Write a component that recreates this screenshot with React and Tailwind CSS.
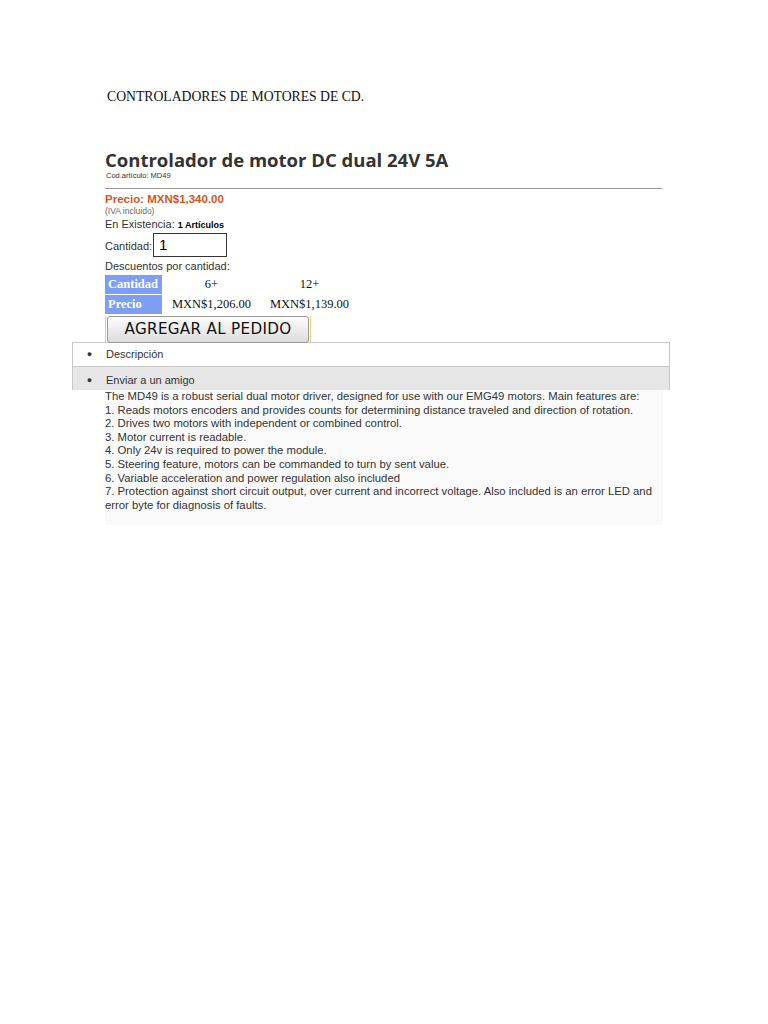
import React from 'react';

const SANS = { fontFamily: '"Liberation Sans", Arial, sans-serif' };

const features = [
  'The MD49 is a robust serial dual motor driver, designed for use with our EMG49 motors. Main features are:',
  '1. Reads motors encoders and provides counts for determining distance traveled and direction of rotation.',
  '2. Drives two motors with independent or combined control.',
  '3. Motor current is readable.',
  '4. Only 24v is required to power the module.',
  '5. Steering feature, motors can be commanded to turn by sent value.',
  '6. Variable acceleration and power regulation also included',
  '7. Protection against short circuit output, over current and incorrect voltage. Also included is an error LED and error byte for diagnosis of faults.',
];

function Tab({ label, active }) {
  return (
    <li
      className={`flex items-center border border-[#c8c8c8] ${
        active ? 'h-[25px] bg-white' : 'h-[23px] pt-[4px] bg-[#e6e6e6] border-t-0 border-b-0'
      }`}
    >
      <span className="w-[33px] text-center text-[9px] text-[#333]">●</span>
      <span className="text-[11px] text-[#333]">{label}</span>
    </li>
  );
}

export default function App() {
  return (
    <div className="min-h-[1024px] bg-white pt-[89px]" style={SANS}>
      <p
        className="ml-[107px] text-[13.7px] leading-[16px] text-[#111]"
        style={{ fontFamily: '"Liberation Serif", "Times New Roman", serif' }}
      >
        CONTROLADORES DE MOTORES DE CD.
      </p>

      <div className="ml-[105px] mr-[106px] mt-[44px]">
        <h1
          className="text-[18.5px] leading-[22px] font-bold text-[#333]"
          style={{ fontFamily: '"Open Sans", "Noto Sans", sans-serif' }}
        >
          Controlador de motor DC dual 24V 5A
        </h1>
        <p className="text-[7.5px] leading-[10px] text-[#333] ml-[1px]">Cod.artículo: MD49</p>
        <div className="mt-[7px] border-t border-[#999]" />

        <p className="mt-[4px] text-[11.5px] leading-[13px] font-bold text-[#d9531e]">
          Precio: MXN$1,340.00
        </p>
        <p className="text-[8.5px] leading-[11px] text-[#666]">(IVA incluido)</p>
        <p className="mt-[1px] text-[11px] leading-[13px] text-[#333]">
          En Existencia: <span className="text-[9px] font-bold text-black">1 Artículos</span>
        </p>
        <div className="mt-[1px] flex items-center text-[11px] text-[#333]">
          <span className="pt-[3px]">Cantidad:</span>
          <span className="ml-[1px] flex items-center w-[74px] h-[24px] border border-[#333] px-[5px] text-[15px] text-black">
            1
          </span>
        </div>
        <p className="mt-[2px] text-[11px] leading-[14px] text-[#333]">Descuentos por cantidad:</p>

        <table
          className="mt-[1px] border-separate border-spacing-[1px] -ml-[1px] text-[12.5px] text-[#111]"
          style={{ fontFamily: '"Liberation Serif", "Times New Roman", serif' }}
        >
          <tbody>
            <tr className="h-[19px]">
              <td className="w-[57px] bg-[#7d9ef2] px-[3px] font-bold text-white">Cantidad</td>
              <td className="w-[97px] text-center">6+</td>
              <td className="w-[97px] text-center">12+</td>
            </tr>
            <tr className="h-[19px]">
              <td className="bg-[#7d9ef2] px-[3px] font-bold text-white">Precio</td>
              <td className="text-center">MXN$1,206.00</td>
              <td className="text-center">MXN$1,139.00</td>
            </tr>
          </tbody>
        </table>

        <div className="mt-[1px] flex w-[206px] h-[27px] border-x border-[#efc880] px-[1px]">
          <button
            className="flex-1 rounded-[3px] border border-[#9a9a9a] bg-gradient-to-b from-[#fdfdfd] to-[#dcdcdc] text-[15.2px] text-[#111] tracking-[0.3px]"
            style={{ fontFamily: '"DejaVu Sans", Verdana, sans-serif' }}
          >
            AGREGAR AL PEDIDO
          </button>
        </div>
      </div>

      <ul className="ml-[72px] mr-[98px] mt-[-1px]">
        <Tab label="Descripción" active />
        <Tab label="Enviar a un amigo" />
      </ul>

      <div className="ml-[105px] mr-[105px] h-[135px] bg-[#fafafa] text-[11.3px] leading-[13.6px] text-[#333]">
        {features.map((line) => (
          <p key={line}>{line}</p>
        ))}
      </div>
    </div>
  );
}
